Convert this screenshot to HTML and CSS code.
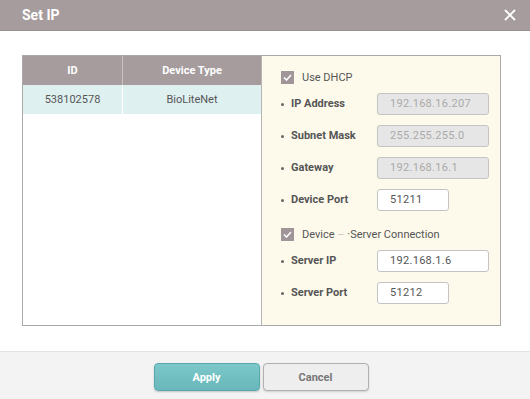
FILE: index.html
```html
<!DOCTYPE html>
<html>
<head>
<meta charset="utf-8">
<link rel="stylesheet" href="styles.css">
</head>
<body>
<div class="dialog">
  <div class="titlebar">
    <span class="title">Set IP</span>
    <svg class="close" width="12" height="12" viewBox="0 0 12 12"><path d="M1 1L11 11M11 1L1 11" stroke="#fff" stroke-width="1.8" fill="none"/></svg>
  </div>
  <div class="body">
    <div class="box">
      <div class="list">
        <div class="thead">
          <div class="c1">ID</div>
          <div class="c2">Device Type</div>
        </div>
        <div class="trow">
          <div class="c1">538102578</div>
          <div class="c2">BioLiteNet</div>
        </div>
      </div>
      <div class="form">
        <div class="check"><span class="cb"><svg width="9" height="7" viewBox="0 0 9 7"><path d="M1 3.5L3.5 6L8 1" stroke="#fff" stroke-width="1.5" fill="none"/></svg></span><span>Use DHCP</span></div>
        <div class="field"><span class="lbl">IP Address</span><span class="inp dis wide">192.168.16.207</span></div>
        <div class="field"><span class="lbl">Subnet Mask</span><span class="inp dis wide">255.255.255.0</span></div>
        <div class="field"><span class="lbl">Gateway</span><span class="inp dis wide">192.168.16.1</span></div>
        <div class="field"><span class="lbl">Device Port</span><span class="inp narrow">51211</span></div>
        <div class="check check2"><span class="cb"><svg width="9" height="7" viewBox="0 0 9 7"><path d="M1 3.5L3.5 6L8 1" stroke="#fff" stroke-width="1.5" fill="none"/></svg></span><span>Device <span class="dash">–</span> ·Server Connection</span></div>
        <div class="field f2"><span class="lbl">Server IP</span><span class="inp wide">192.168.1.6</span></div>
        <div class="field"><span class="lbl">Server Port</span><span class="inp narrow">51212</span></div>
      </div>
    </div>
  </div>
  <div class="footer">
    <button class="btn apply">Apply</button>
    <button class="btn cancel">Cancel</button>
  </div>
</div>
</body>
</html>
```
FILE: styles.css
```css
* { box-sizing: border-box; }
html, body { margin: 0; padding: 0; }
body { width: 530px; height: 399px; background: #fff; font-family: Roboto, "Liberation Sans", sans-serif; overflow: hidden; }
.dialog { display: flex; flex-direction: column; height: 399px; }
.titlebar { height: 31px; background: #a69c9e; display: flex; align-items: center; justify-content: space-between; padding: 0 14px 0 22px; border-bottom: 1px solid #9a9092; }
.title { color: #fff; font-weight: bold; font-size: 14px; }
.close { display: block; }
.body { flex: 1; padding: 24px 29px 0 22px; }
.box { height: 271px; border: 1px solid #a9a9a9; display: flex; }
.list { width: 239px; border-right: 1px solid #b5b5b5; background: #fff; }
.thead, .trow { display: flex; height: 29px; }
.thead { background: #a69c9e; color: #fff; font-weight: bold; font-size: 11px; }
.trow { background: #dff0f1; color: #555; font-size: 11px; }
.c1, .c2 { display: flex; align-items: center; justify-content: center; }
.c1 { width: 100px; border-right: 1px solid #c9c2c3; }
.trow .c1 { border-right: 1px solid #fff; }
.c2 { flex: 1; }
.form { flex: 1; background: #fdfaec; padding: 15px 0 0 19px; }
.check { display: flex; align-items: center; height: 13px; font-size: 11px; color: #555; gap: 8px; }
.cb { width: 13px; height: 13px; background: #a0969a; display: flex; align-items: center; justify-content: center; }
.dash { color: #c8c8c8; }
.check2 { margin-top: 18px; }
.field { display: flex; align-items: center; height: 21px; margin-top: 11px; }
.field.f2 { margin-top: 9px; }
.form .check + .field { margin-top: 9px; }
.lbl { width: 96px; font-size: 11px; font-weight: bold; color: #555; position: relative; padding-left: 10px; }
.lbl::before { content: ""; position: absolute; left: 0; top: 6px; width: 3px; height: 3px; border-radius: 50%; background: #666; }
.inp { height: 22px; border: 1px solid #c4c4c4; border-radius: 3px; background: #fff; font-size: 11px; color: #555; display: flex; align-items: center; padding-left: 12px; letter-spacing: 0.3px; }
.inp.dis { background: #e6e6e6; color: #aaa; }
.wide { width: 112px; }
.narrow { width: 72px; }
.footer { height: 48px; background: #f3f3f3; border-top: 1px solid #e2e2e2; display: flex; justify-content: center; align-items: flex-start; padding: 11px 8px 0 0; gap: 3px; }
.btn { width: 106px; height: 28px; border-radius: 4px; font-family: Roboto, "Liberation Sans", sans-serif; font-weight: bold; font-size: 11px; cursor: pointer; }
.apply { background: linear-gradient(#7cc8cb, #69b7ba); border: 1px solid #5aa9ad; color: #fff; box-shadow: 0 1px 2px rgba(0,0,0,0.2); }
.cancel { background: #eeeeee; border: 1px solid #b0b0b0; color: #777; box-shadow: 0 1px 2px rgba(0,0,0,0.15); }
```
